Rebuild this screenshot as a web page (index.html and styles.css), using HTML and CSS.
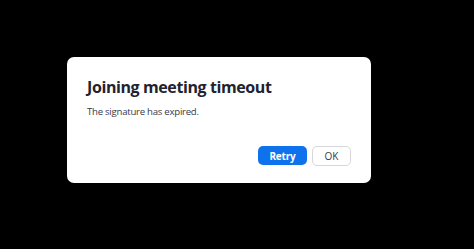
FILE: index.html
```html
<!DOCTYPE html>
<html>
<head>
<meta charset="utf-8">
<link rel="stylesheet" href="styles.css">
</head>
<body>
<div class="stage">
  <div class="dialog">
    <h1 class="title">Joining meeting timeout</h1>
    <p class="message">The signature has expired.</p>
    <div class="actions">
      <button class="btn btn-primary">Retry</button>
      <button class="btn btn-secondary">OK</button>
    </div>
  </div>
</div>
</body>
</html>
```
FILE: styles.css
```css
html, body {
  margin: 0;
  padding: 0;
  background: #000;
  width: 474px;
  height: 249px;
  overflow: hidden;
  font-family: "Open Sans", "Noto Sans", sans-serif;
}
.stage {
  padding: 57px 0 0 67px;
}
.dialog {
  width: 304px;
  height: 126px;
  box-sizing: border-box;
  background: #fff;
  border-radius: 7px;
  padding: 19px 20px 0 20px;
  display: flex;
  flex-direction: column;
}
.title {
  margin: 0;
  font-size: 16px;
  font-weight: 700;
  letter-spacing: -0.4px;
  color: #222230;
  line-height: 22px;
}
.message {
  margin: 8px 0 0 0;
  font-size: 9.6px;
  letter-spacing: -0.25px;
  color: #39394d;
  line-height: 12px;
}
.actions {
  margin-top: auto;
  margin-bottom: 17px;
  display: flex;
  justify-content: flex-end;
  gap: 5px;
}
.btn {
  height: 19px;
  border-radius: 5px;
  font-family: inherit;
  font-size: 10px;
  padding: 0;
  box-sizing: border-box;
}
.btn-primary {
  width: 49px;
  background: #0e72ed;
  border: none;
  color: #fff;
  font-weight: 700;
  letter-spacing: -0.2px;
}
.btn-secondary {
  width: 39px;
  height: 20px;
  background: #fff;
  border: 1px solid #d6d6db;
  color: #39394d;
  font-weight: 400;
}
```
